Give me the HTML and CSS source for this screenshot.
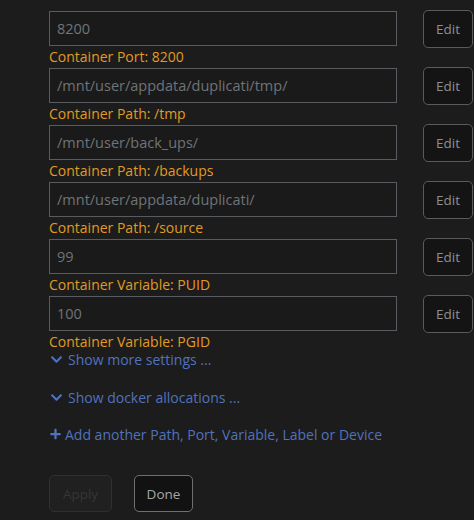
FILE: index.html
```html
<!DOCTYPE html>
<html lang="en">
<head>
<meta charset="utf-8">
<title>Docker settings</title>
<link rel="stylesheet" href="styles.css">
</head>
<body>
<div class="form">
  <div class="row">
    <input class="field" type="text" value="8200" readonly>
    <button class="edit" type="button">Edit</button>
  </div>
  <div class="label">Container Port: 8200</div>

  <div class="row">
    <input class="field" type="text" value="/mnt/user/appdata/duplicati/tmp/" readonly>
    <button class="edit" type="button">Edit</button>
  </div>
  <div class="label">Container Path: /tmp</div>

  <div class="row">
    <input class="field" type="text" value="/mnt/user/back_ups/" readonly>
    <button class="edit" type="button">Edit</button>
  </div>
  <div class="label">Container Path: /backups</div>

  <div class="row">
    <input class="field" type="text" value="/mnt/user/appdata/duplicati/" readonly>
    <button class="edit" type="button">Edit</button>
  </div>
  <div class="label">Container Path: /source</div>

  <div class="row">
    <input class="field" type="text" value="99" readonly>
    <button class="edit" type="button">Edit</button>
  </div>
  <div class="label">Container Variable: PUID</div>

  <div class="row">
    <input class="field" type="text" value="100" readonly>
    <button class="edit" type="button">Edit</button>
  </div>
  <div class="label">Container Variable: PGID</div>

  <div class="link first">
    <svg class="chev" viewBox="0 0 448 512" width="13" height="13"><path d="M207.029 381.476L12.686 187.132c-9.373-9.373-9.373-24.569 0-33.941l22.667-22.667c9.357-9.357 24.522-9.375 33.901-.04L224 284.505l154.745-154.021c9.379-9.335 24.544-9.317 33.901.04l22.667 22.667c9.373 9.373 9.373 24.569 0 33.941L240.971 381.476c-9.373 9.372-24.569 9.372-33.942 0z"/></svg>
    <span class="ltext">Show more settings ...</span>
  </div>
  <div class="link">
    <svg class="chev" viewBox="0 0 448 512" width="13" height="13"><path d="M207.029 381.476L12.686 187.132c-9.373-9.373-9.373-24.569 0-33.941l22.667-22.667c9.357-9.357 24.522-9.375 33.901-.04L224 284.505l154.745-154.021c9.379-9.335 24.544-9.317 33.901.04l22.667 22.667c9.373 9.373 9.373 24.569 0 33.941L240.971 381.476c-9.373 9.372-24.569 9.372-33.942 0z"/></svg>
    <span class="ltext">Show docker allocations ...</span>
  </div>
  <div class="link add">
    <svg class="plus" viewBox="0 0 448 512" width="11" height="12"><path d="M416 208H272V64c0-17.670-14.330-32-32-32h-32c-17.670 0-32 14.330-32 32v144H32c-17.670 0-32 14.330-32 32v32c0 17.670 14.330 32 32 32h144v144c0 17.670 14.330 32 32 32h32c17.670 0 32-14.330 32-32V304h144c17.670 0 32-14.330 32-32v-32c0-17.670-14.330-32-32-32z"/></svg>
    <span class="ltext">Add another Path, Port, Variable, Label or Device</span>
  </div>

  <div class="actions">
    <button class="btn disabled" type="button" disabled>Apply</button>
    <button class="btn done" type="button">Done</button>
  </div>
</div>
</body>
</html>
```

FILE: styles.css
```css
html, body {
  margin: 0;
  padding: 0;
  background: #1c1c1c;
  height: 520px;
  overflow: hidden;
}

.form {
  padding: 11px 0 0 49px;
  font-family: "Open Sans", "Noto Sans", "DejaVu Sans", sans-serif;
  font-size: 14px;
}

.row {
  display: flex;
  align-items: center;
  gap: 26px;
  height: 35px;
}

.field {
  box-sizing: border-box;
  width: 348px;
  height: 35px;
  margin: 0;
  padding: 0 7px;
  background: #1a1a1a;
  border: 1px solid #585c60;
  border-radius: 0;
  color: #707377;
  font-family: inherit;
  font-size: 14.5px;
  outline: none;
}

.edit {
  box-sizing: border-box;
  width: 50px;
  height: 38px;
  flex: none;
  margin: 0;
  padding: 0;
  background: #141414;
  border: 1px solid #575b5e;
  border-radius: 5px;
  color: #8d9093;
  font-family: inherit;
  font-size: 13.5px;
}

.label {
  height: 22px;
  line-height: 22px;
  color: #e09b22;
  font-size: 14px;
}

.link {
  display: flex;
  align-items: center;
  height: 18px;
  margin-top: 20px;
  padding-left: 1px;
  color: #5172bd;
  font-size: 14px;
}

.link.first {
  margin-top: -3px;
}

.link.add {
  margin-top: 19px;
}

.chev {
  fill: #5172bd;
  margin-right: 5px;
}

.plus {
  fill: #5172bd;
  margin-right: 4px;
}

.actions {
  display: flex;
  gap: 22px;
  margin-top: 32px;
}

.btn {
  box-sizing: border-box;
  height: 37px;
  margin: 0;
  border-radius: 5px;
  font-family: inherit;
  font-size: 13.5px;
}

.btn.disabled {
  width: 63px;
  background: #202020;
  border: 1px solid #303030;
  color: #363636;
}

.btn.done {
  width: 59px;
  background: #121212;
  border: 1px solid #6d7174;
  color: #a4a7aa;
}
```
